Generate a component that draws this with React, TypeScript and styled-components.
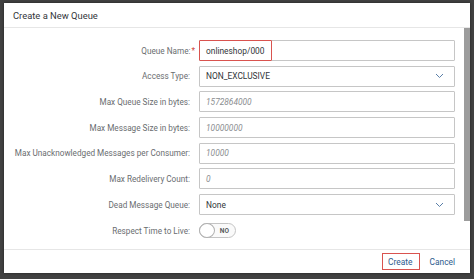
import styled, { createGlobalStyle } from "styled-components";

const GlobalStyle = createGlobalStyle`
  html, body {
    margin: 0;
    padding: 0;
    background: #424242;
    font-family: Roboto, "Liberation Sans", Arial, sans-serif;
  }
  * {
    box-sizing: border-box;
  }
`;

const Backdrop = styled.div`
  width: 474px;
  height: 279px;
  padding: 3px 4px 6px 4px;
  background: #424242;
`;

const Dialog = styled.div`
  width: 466px;
  height: 270px;
  background: #fff;
  display: flex;
  flex-direction: column;
  box-shadow: 0 0 3px rgba(0, 0, 0, 0.5);
`;

const Header = styled.div`
  height: 25px;
  flex: none;
  display: flex;
  align-items: center;
  padding-left: 9px;
  border-bottom: 1px solid #e6e6e6;
  font-size: 9.4px;
  color: #32363a;
`;

const Body = styled.div`
  flex: 1;
  display: flex;
  overflow: hidden;
`;

const Content = styled.div`
  flex: 1;
  overflow: hidden;
`;

// scroll position is fixed in the picture, so the bar is drawn, not native
const ScrollTrack = styled.div`
  width: 6px;
  flex: none;
  background: #fff;
`;

const ScrollThumb = styled.div`
  width: 6px;
  height: 193px;
  background: #9c9c9c;
`;

const Form = styled.div`
  display: grid;
  grid-template-columns: 186px 256px;
  column-gap: 9px;
  row-gap: 4.7px;
  padding: 12px 0 28px 0;
  align-items: center;
`;

const Label = styled.div`
  text-align: right;
  font-size: 8.2px;
  color: #6a6d70;
  white-space: nowrap;
`;

const Required = styled.span`
  color: #d0473f;
  margin-left: 1px;
  margin-right: -5px;
`;

const Field = styled.div`
  position: relative;
  height: 21px;
  border: 1px solid #c6c6c6;
  border-radius: 1px;
  display: flex;
  align-items: center;
  justify-content: space-between;
  padding: 0 10px 0 6px;
  font-size: 8.4px;
  color: #32363a;
  background: #fff;
`;

const Placeholder = styled.span`
  font-style: italic;
  color: #8a8d90;
`;

const Highlight = styled.div`
  position: absolute;
  left: -1px;
  top: -1px;
  width: 73px;
  height: 21px;
  border: 1.5px solid #d9534f;
  border-radius: 1px;
`;

const SwitchRow = styled.div`
  height: 22px;
  display: flex;
  align-items: center;
`;

const Switch = styled.div`
  position: relative;
  width: 37px;
  height: 15px;
  border: 1px solid #c4c4c4;
  border-radius: 8px;
  background: #fafafa;
  display: flex;
  align-items: center;
  justify-content: flex-end;
  padding-right: 6px;
  font-size: 6.6px;
  font-weight: 700;
  color: #5a5d60;
`;

const Knob = styled.div`
  position: absolute;
  left: -1px;
  top: -1px;
  width: 16px;
  height: 15px;
  border-radius: 50%;
  border: 1px solid #b0b0b0;
  background: #fff;
`;

const Footer = styled.div`
  height: 24px;
  flex: none;
  border-top: 1px solid #e6e6e6;
  display: flex;
  align-items: center;
  justify-content: flex-end;
  padding-right: 15px;
  gap: 10px;
`;

const Button = styled.div<{ $marked?: boolean }>`
  height: 17px;
  display: flex;
  align-items: center;
  padding: ${(p) => (p.$marked ? "0 6px 0 5px" : "0")};
  border: ${(p) => (p.$marked ? "1.5px solid #d9534f" : "none")};
  font-size: 8.4px;
  color: #2d5b8e;
`;

function Chevron() {
  return (
    <svg width="9" height="6" viewBox="0 0 9 6">
      <path d="M1 1 L4.5 4.5 L8 1" fill="none" stroke="#5a7fa8" strokeWidth="1" />
    </svg>
  );
}

export default function App() {
  return (
    <>
      <GlobalStyle />
      <Backdrop>
        <Dialog>
          <Header>Create a New Queue</Header>
          <Body>
            <Content>
              <Form>
                <Label>
                  Queue Name:<Required>*</Required>
                </Label>
                <Field>
                  onlineshop/000
                  <Highlight />
                </Field>

                <Label>Access Type:</Label>
                <Field>
                  NON_EXCLUSIVE
                  <Chevron />
                </Field>

                <Label>Max Queue Size in bytes:</Label>
                <Field>
                  <Placeholder>1572864000</Placeholder>
                </Field>

                <Label>Max Message Size in bytes:</Label>
                <Field>
                  <Placeholder>10000000</Placeholder>
                </Field>

                <Label>Max Unacknowledged Messages per Consumer:</Label>
                <Field>
                  <Placeholder>10000</Placeholder>
                </Field>

                <Label>Max Redelivery Count:</Label>
                <Field>
                  <Placeholder>0</Placeholder>
                </Field>

                <Label>Dead Message Queue:</Label>
                <Field>
                  None
                  <Chevron />
                </Field>

                <Label>Respect Time to Live:</Label>
                <SwitchRow>
                  <Switch>
                    <Knob />
                    NO
                  </Switch>
                </SwitchRow>
              </Form>
            </Content>
            <ScrollTrack>
              <ScrollThumb />
            </ScrollTrack>
          </Body>
          <Footer>
            <Button $marked>Create</Button>
            <Button>Cancel</Button>
          </Footer>
        </Dialog>
      </Backdrop>
    </>
  );
}
